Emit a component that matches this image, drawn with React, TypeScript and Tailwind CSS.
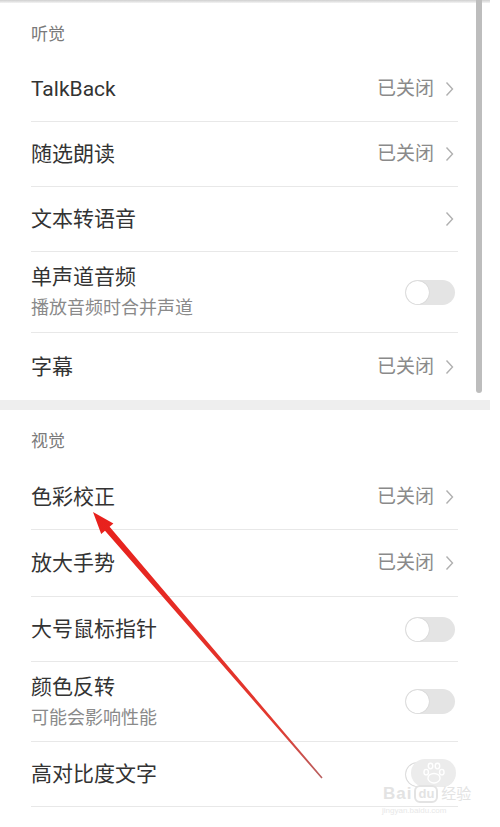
import { ReactNode } from 'react';

type RowType = {
  title: string;
  subtitle?: string;
  value?: string;
  kind: 'link' | 'toggle';
  h: string;
  last?: boolean;
};

const hearing: RowType[] = [
  { title: 'TalkBack', value: '已关闭', kind: 'link', h: 'h-[65px]' },
  { title: '随选朗读', value: '已关闭', kind: 'link', h: 'h-[65px]' },
  { title: '文本转语音', kind: 'link', h: 'h-[65px]' },
  { title: '单声道音频', subtitle: '播放音频时合并声道', kind: 'toggle', h: 'h-[81px]' },
  { title: '字幕', value: '已关闭', kind: 'link', h: 'h-[67px]', last: true },
];

const vision: RowType[] = [
  { title: '色彩校正', value: '已关闭', kind: 'link', h: 'h-[66px]' },
  { title: '放大手势', value: '已关闭', kind: 'link', h: 'h-[67px]' },
  { title: '大号鼠标指针', kind: 'toggle', h: 'h-[65px]' },
  { title: '颜色反转', subtitle: '可能会影响性能', kind: 'toggle', h: 'h-[80px]' },
  { title: '高对比度文字', kind: 'toggle', h: 'h-[65px]' },
  { title: '高级视觉效果', kind: 'link', h: 'h-[65px]', last: true },
];

const Chevron = () => (
  <svg width="9" height="16" viewBox="0 0 9 16" className="ml-[11px]">
    <polyline points="1.5,1.5 7.5,8 1.5,14.5" fill="none" stroke="#b0b0b0" strokeWidth="1.4" />
  </svg>
);

const Toggle = () => (
  <div className="w-[50px] h-[25px] rounded-full bg-[#e4e4e4] flex items-center pl-[1px]">
    <div className="w-[23px] h-[23px] rounded-full bg-white shadow-[0_0_1px_rgba(0,0,0,0.25)]" />
  </div>
);

const Row = ({ title, subtitle, value, kind, h, last }: RowType) => (
  <div className={`ml-[31px] w-[427px] flex items-center ${h} ${last ? '' : 'border-b border-[#e8e8e8]'}`}>
    <div className="flex-1 flex flex-col gap-[6px]">
      <span className="text-[21px] leading-[26px] text-[#333333]">{title}</span>
      {subtitle && <span className="text-[18px] leading-[24px] text-[#8a8a8a]">{subtitle}</span>}
    </div>
    {kind === 'link' ? (
      <div className="flex items-center pr-[4px]">
        {value && <span className="text-[19px] leading-[24px] text-[#8a8a8a]">{value}</span>}
        <Chevron />
      </div>
    ) : (
      <div className="pr-[3px]">
        <Toggle />
      </div>
    )}
  </div>
);

const Section = ({ label, children }: { label: string; children: ReactNode }) => (
  <div className="bg-white">
    <div className="h-[54px] pl-[31px] pt-[19px]">
      <span className="text-[17px] leading-[24px] text-[#7a7a7a]">{label}</span>
    </div>
    {children}
  </div>
);

const Arrow = () => (
  <svg className="absolute left-0 top-0 pointer-events-none" width="500" height="827" viewBox="0 0 500 827">
    <defs>
      <linearGradient id="arrowGrad" x1="93" y1="512" x2="322" y2="778" gradientUnits="userSpaceOnUse">
        <stop offset="0" stopColor="#e8201c" />
        <stop offset="0.8" stopColor="#e23a30" />
        <stop offset="1" stopColor="#b86060" />
      </linearGradient>
    </defs>
    <polygon
      points="93,512 113.4,523.5 109.6,526.7 322.6,777.5 321.4,778.5 105,530.7 101.2,533.9"
      fill="url(#arrowGrad)"
    />
  </svg>
);

const Watermark = () => (
  <div className="absolute left-[380px] top-[756px] w-[100px] h-[66px] pointer-events-none">
    <div className="absolute left-[31px] top-[3px] w-[45px] h-[28px] rounded-full bg-[#ececec]" />
    <svg className="absolute left-[41px] top-[4px]" width="26" height="26" viewBox="0 0 30 30">
      <g fill="none" stroke="#ffffff" strokeWidth="1.6">
        <ellipse cx="15" cy="21" rx="7" ry="5.5" />
        <ellipse cx="6" cy="14" rx="2.6" ry="3.2" />
        <ellipse cx="11" cy="7" rx="2.6" ry="3.2" />
        <ellipse cx="19" cy="7" rx="2.6" ry="3.2" />
        <ellipse cx="24" cy="14" rx="2.6" ry="3.2" />
      </g>
    </svg>
    <div className="absolute left-[3px] top-[29px] flex items-center font-['Liberation_Sans','Noto_Sans_CJK_SC',sans-serif] text-[17px] leading-[18px] text-[#e3e3e3]">
      <span className="font-bold tracking-[1px]">Bai</span>
      <span className="ml-[2px] px-[2px] rounded-[6px] border-2 border-[#e3e3e3] text-[13px] leading-[14px] font-bold">du</span>
      <span className="ml-[3px] text-[15px]">经验</span>
    </div>
    <div className="absolute left-[2px] top-[50px] text-[8px] leading-[10px] text-[#e8e8e8] font-['Liberation_Sans',sans-serif]">
      jingyan.baidu.com
    </div>
  </div>
);

export default function App() {
  return (
    <div className="relative w-[500px] h-[827px] overflow-hidden bg-white font-[Roboto,'Noto_Sans_CJK_SC',sans-serif]">
      <div className="w-[490px]">
        <div className="h-[3px] bg-gradient-to-b from-[#cfcfcf] to-[#f4f4f4]" />
        <Section label="听觉">
          {hearing.map((r) => (
            <Row key={r.title} {...r} />
          ))}
        </Section>
        <div className="h-[10px] bg-[#eeeeee]" />
        <Section label="视觉">
          {vision.map((r) => (
            <Row key={r.title} {...r} />
          ))}
        </Section>
      </div>
      <div className="absolute left-[476px] top-0 w-[6px] h-[393px] rounded-b-[3px] bg-[#bdbdbd]" />
      <Watermark />
      <Arrow />
    </div>
  );
}
